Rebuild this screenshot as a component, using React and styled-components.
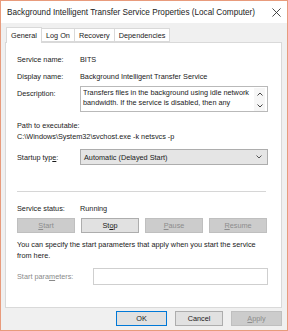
import React from "react";
import styled, { createGlobalStyle } from "styled-components";

const Global = createGlobalStyle`
  html, body { margin: 0; padding: 0; background: #ffffff; }
  body { font-family: "Liberation Sans", Arial, sans-serif; font-size: 7.3px; color: #1a1a1a; }
  * { box-sizing: border-box; }
`;

const Window = styled.div`
  width: 288px;
  height: 331px;
  border: 1px solid #e89b7c;
  background: #f0f0f0;
  display: flex;
  flex-direction: column;
`;

const TitleBar = styled.div`
  height: 22px;
  background: #ffffff;
  display: flex;
  align-items: center;
  justify-content: space-between;
  padding: 0 6px 0 6px;
`;

const TitleText = styled.span`
  font-size: 8.2px;
  color: #222;
`;

const Close = styled.svg`
  width: 9px;
  height: 9px;
`;

const Body = styled.div`
  flex: 1;
  padding: 3px 5px 0 4px;
  display: flex;
  flex-direction: column;
`;

const Tabs = styled.div`
  display: flex;
  align-items: flex-end;
  height: 16px;
  padding-left: 1px;
`;

const Tab = styled.div`
  height: ${(p) => (p.$active ? "16px" : "14px")};
  padding: 0 4px;
  display: flex;
  align-items: center;
  background: #ffffff;
  border: 1px solid #d9d9d9;
  border-bottom: ${(p) => (p.$active ? "none" : "1px solid #d9d9d9")};
  margin-left: ${(p) => (p.$active ? "0" : "-1px")};
  position: relative;
  z-index: ${(p) => (p.$active ? 2 : 1)};
  margin-bottom: ${(p) => (p.$active ? "-1px" : "0")};
`;

const Panel = styled.div`
  height: 266px;
  background: #ffffff;
  border: 1px solid #d9d9d9;
  padding: 10px 13px 0 11px;
  display: flex;
  flex-direction: column;
`;

const Row = styled.div`
  display: flex;
  align-items: ${(p) => (p.$top ? "flex-start" : "center")};
  height: ${(p) => p.$h || "auto"};
  margin-top: ${(p) => p.$mt || "0"};
`;

const Label = styled.div`
  width: ${(p) => p.$w || "63px"};
  flex-shrink: 0;
  color: ${(p) => (p.$dim ? "#8a8a8a" : "#1a1a1a")};
  padding-top: ${(p) => p.$pt || "0"};
`;

const Value = styled.div`
  white-space: nowrap;
`;

const DescBox = styled.div`
  width: 192px;
  height: 26px;
  border: 1px solid #b9b9b9;
  display: flex;
  padding: 1px 0 0 2px;
  line-height: 9.5px;
`;

const DescText = styled.div`
  flex: 1;
  white-space: nowrap;
  overflow: hidden;
`;

const ScrollArrows = styled.div`
  width: 11px;
  display: flex;
  flex-direction: column;
  align-items: center;
  justify-content: space-between;
  padding: 4px 0 3px;
  background: #f6f6f6;
  margin: 0 2px 0 2px;
`;

const Select = styled.div`
  width: 189px;
  height: 16px;
  background: #e5e5e5;
  border: 1px solid #adadad;
  display: flex;
  align-items: center;
  justify-content: space-between;
  padding: 0 5px 0 3px;
`;

const Separator = styled.div`
  height: 1px;
  background: #d6d6d6;
  width: 249px;
  margin-top: 26px;
`;

const ButtonRow = styled.div`
  display: flex;
  gap: 6px;
  margin-top: 4px;
`;

const Btn = styled.div`
  width: ${(p) => p.$w || "58px"};
  height: 15px;
  display: flex;
  align-items: center;
  justify-content: center;
  background: ${(p) => (p.$disabled ? "#cccccc" : "#e1e1e1")};
  border: 1px solid ${(p) => (p.$primary ? "#0078d7" : p.$disabled ? "#bfbfbf" : "#adadad")};
  color: ${(p) => (p.$disabled ? "#8d8d8d" : "#1a1a1a")};
  u { text-decoration: underline; }
`;

const Note = styled.div`
  margin-top: 6px;
  line-height: 11px;
  width: 255px;
`;

const Input = styled.div`
  width: 176px;
  height: 17px;
  border: 1px solid #cfcfcf;
  background: #fff;
`;

const Footer = styled.div`
  display: flex;
  justify-content: flex-end;
  gap: 8px;
  padding: 3px 0 0 0;
`;

export default function App() {
  return (
    <>
      <Global />
      <Window>
        <TitleBar>
          <TitleText>Background Intelligent Transfer Service Properties (Local Computer)</TitleText>
          <Close viewBox="0 0 10 10">
            <path d="M0.5 0.5 L9.5 9.5 M9.5 0.5 L0.5 9.5" stroke="#333" strokeWidth="1" fill="none" />
          </Close>
        </TitleBar>
        <Body>
          <Tabs>
            <Tab $active>General</Tab>
            <Tab>Log On</Tab>
            <Tab>Recovery</Tab>
            <Tab>Dependencies</Tab>
          </Tabs>
          <Panel>
            <Row $h="12px">
              <Label>Service name:</Label>
              <Value>BITS</Value>
            </Row>
            <Row $h="12px" $mt="5px">
              <Label>Display name:</Label>
              <Value>Background Intelligent Transfer Service</Value>
            </Row>
            <Row $top $mt="4px">
              <Label $pt="3px">Description:</Label>
              <DescBox>
                <DescText>
                  Transfers files in the background using idle network
                  <br />
                  bandwidth. If the service is disabled, then any
                </DescText>
                <ScrollArrows>
                  <svg width="6" height="4" viewBox="0 0 6 4">
                    <path d="M0.5 3.5 L3 1 L5.5 3.5" stroke="#444" fill="none" />
                  </svg>
                  <svg width="6" height="4" viewBox="0 0 6 4">
                    <path d="M0.5 0.5 L3 3 L5.5 0.5" stroke="#444" fill="none" />
                  </svg>
                </ScrollArrows>
              </DescBox>
            </Row>
            <Row $h="11px" $mt="8px">
              <Label $w="auto">Path to executable:</Label>
            </Row>
            <Row $h="11px">
              <Value>C:\Windows\System32\svchost.exe -k netsvcs -p</Value>
            </Row>
            <Row $mt="7px">
              <Label>Startup typ<u>e</u>:</Label>
              <Select>
                <span>Automatic (Delayed Start)</span>
                <svg width="6" height="4" viewBox="0 0 6 4">
                  <path d="M0.5 0.5 L3 3 L5.5 0.5" stroke="#555" fill="none" />
                </svg>
              </Select>
            </Row>
            <Separator />
            <Row $h="12px" $mt="10px">
              <Label>Service status:</Label>
              <Value>Running</Value>
            </Row>
            <ButtonRow>
              <Btn $disabled>
                <span><u>S</u>tart</span>
              </Btn>
              <Btn>
                <span>St<u>o</u>p</span>
              </Btn>
              <Btn $disabled>
                <span><u>P</u>ause</span>
              </Btn>
              <Btn $disabled>
                <span><u>R</u>esume</span>
              </Btn>
            </ButtonRow>
            <Note>
              You can specify the start parameters that apply when you start the service from here.
            </Note>
            <Row $mt="7px">
              <Label $w="76px" $dim>
                Start para<u>m</u>eters:
              </Label>
              <Input />
            </Row>
          </Panel>
          <Footer>
            <Btn $primary $w="51px">OK</Btn>
            <Btn $w="48px">Cancel</Btn>
            <Btn $disabled $w="51px">
              <span><u>A</u>pply</span>
            </Btn>
          </Footer>
        </Body>
      </Window>
    </>
  );
}
